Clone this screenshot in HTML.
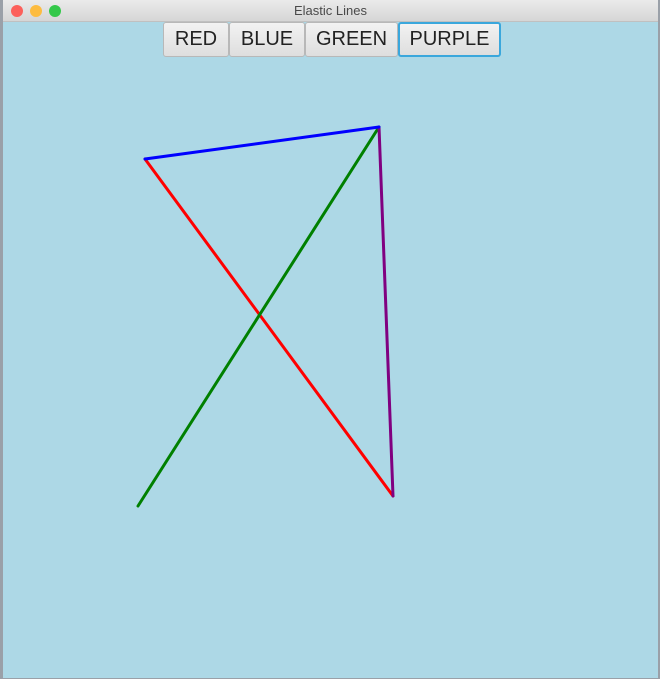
<!DOCTYPE html>
<html><head><style>
body{margin:0;width:660px;height:679px;background:#9aa0a8;position:relative;overflow:hidden;font-family:"Liberation Sans",sans-serif}
#win{position:absolute;left:3px;top:0;width:655px;height:678px;background:#add8e6}
#tb{position:absolute;left:0;top:0;width:655px;height:22px;background:linear-gradient(#ebebeb,#d6d6d6);border-bottom:1px solid #c0c0c0;box-sizing:border-box;text-align:center;font-size:13px;line-height:22px;color:#4a4a4a}
.d{position:absolute;top:5px;width:12px;height:12px;border-radius:50%}
.b{position:absolute;top:22px;height:35px;box-sizing:border-box;border:1px solid #b8b8b8;border-radius:3px;background:linear-gradient(#f2f2f2,#dedede);font-size:20px;line-height:33px;text-align:center;color:#222}
</style></head><body>
<div id="win">
<div id="tb">Elastic Lines
<div class="d" style="left:8px;background:#fc605b"></div>
<div class="d" style="left:27px;background:#fdbc40"></div>
<div class="d" style="left:46px;background:#34c84a"></div>
</div>
<div class="b" style="left:160px;width:66px">RED</div>
<div class="b" style="left:226px;width:76px">BLUE</div>
<div class="b" style="left:302px;width:93px">GREEN</div>
<div class="b" style="left:395px;width:103px;border:2px solid #3aa7dc;line-height:31px">PURPLE</div>
</div>
<svg width="660" height="679" style="position:absolute;left:0;top:0">
<g stroke-width="3" stroke-linecap="round">
<line x1="145" y1="159" x2="393" y2="496" stroke="#f00"/>
<line x1="379" y1="127" x2="138" y2="506" stroke="#008000"/>
<line x1="379" y1="127" x2="393" y2="496" stroke="#800080"/>
<line x1="145" y1="159" x2="379" y2="127" stroke="#00f"/>
</g></svg>
</body></html>
